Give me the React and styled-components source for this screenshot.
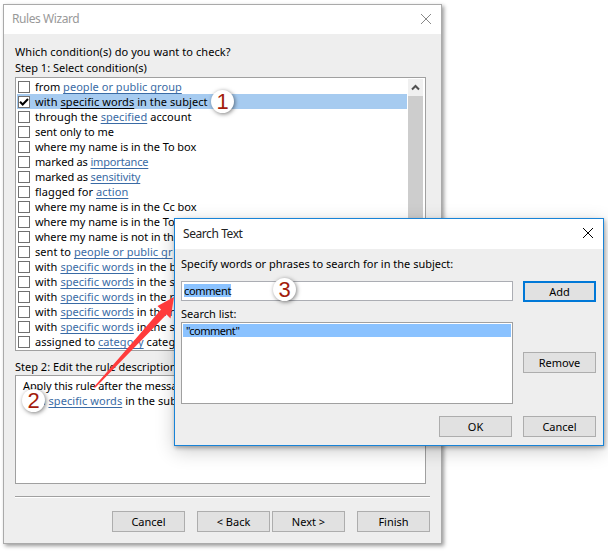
import React from 'react'
import styled, { createGlobalStyle, css } from 'styled-components'

const GlobalStyle = createGlobalStyle`
  body {
    margin: 0;
    background: #fff;
    overflow: hidden;
  }

  * {
    box-sizing: border-box;
  }
`

const Desktop = styled.main`
  position: relative;
  width: 608px;
  height: 551px;
  padding: 4px 0 0 3px;
  overflow: hidden;
  color: #000;
  font: 11px/15px 'Noto Sans', 'Open Sans', sans-serif;
  white-space: nowrap;
`

const Window = styled.section`
  display: flex;
  flex-direction: column;
  width: 439px;
  height: 540px;
  border: 1px solid #aaa;
  background: #eee;
  box-shadow: 2px 2px 4px rgba(0, 0, 0, 0.4);
`

const TitleBar = styled.header`
  display: flex;
  flex: none;
  align-items: center;
  justify-content: space-between;
  height: ${({ $active }) => ($active ? 30 : 29)}px;
  padding: 0 9px 2px 8px;
  background: #fff;
  color: ${({ $active }) => ($active ? '#222' : '#999')};
  font-size: 12px;
  letter-spacing: -0.42px;
`

const Text = styled.span`
  letter-spacing: ${({ $track = 0 }) => $track}px;
`

const Caption = styled(Text)`
  margin: ${({ $margin = 0 }) => $margin};
`

const Body = styled.div`
  display: flex;
  flex: 1;
  flex-direction: column;
  padding: 10px 11px 0 11px;
`

const Conditions = styled.div`
  display: flex;
  gap: 1px;
  width: 411px;
  height: 274px;
  padding: 1px;
  border: 1px solid #a0a0a0;
  background: #fff;
`

const Rows = styled.ul`
  width: 390px;
  margin: 0;
  padding: 0;
  list-style: none;
`

const Row = styled.li`
  display: flex;
  height: 15px;
  padding-left: 1px;
  background: ${({ $selected }) => ($selected ? '#a6cbf0' : '#fff')};
  white-space: pre;
`

const CheckBox = styled.span`
  display: flex;
  flex: none;
  width: 12px;
  height: 12px;
  margin: 2px 5px 0 0;
  border: 1px solid #707070;
  background: #fff;
`

const Link = styled.u`
  color: ${({ $selected }) => ($selected ? '#000' : '#3a6ba5')};
  text-underline-offset: 1.5px;
  text-decoration-thickness: 1px;
  text-decoration-skip-ink: none;
`

const ScrollBar = styled.div`
  width: 15px;
  height: 270px;
  background: #cdcdcd;
`

const ScrollUp = styled.div`
  display: flex;
  align-items: center;
  justify-content: center;
  height: 17px;
  background: #f0f0f0;
`

const Description = styled.div`
  display: flex;
  flex-direction: column;
  width: 411px;
  height: 109px;
  padding: 2px 7px;
  border: 1px solid #a0a0a0;
  background: #fff;
`

const Divider = styled.hr`
  width: 415px;
  height: 2px;
  margin: 12px 0 13px;
  border: 0;
  border-top: 1px solid #a0a0a0;
  background: #fff;
`

const Buttons = styled.footer`
  display: flex;
  justify-content: flex-end;
  gap: ${({ $gap = 12 }) => $gap}px;
`

const Button = styled.button`
  width: 73px;
  height: 21px;
  padding: 0;
  border: ${({ $primary }) => ($primary ? '2px solid #0078d7' : '1px solid #adadad')};
  background: #e1e1e1;
  color: #000;
  font: inherit;
  line-height: 17px;
`

const RemoveButton = styled(Button)`
  margin-top: 46px;
`

const OkButton = styled(Button)`
  justify-self: end;
  margin-right: 1px;
`

const Dialog = styled(Window)`
  position: absolute;
  top: 218px;
  left: 174px;
  width: 430px;
  height: 228px;
  border-color: #1883d7;
  box-shadow: 1px 2px 4px rgba(0, 0, 0, 0.3), 0 5px 18px rgba(0, 0, 0, 0.2);
`

const DialogBody = styled.div`
  display: grid;
  grid-template-columns: 332px 73px;
  grid-template-rows: 25px 25px 110px 21px;
  column-gap: 10px;
  padding: 7px 0 0 6px;
`

const Label = styled.label`
  grid-column: 1 / -1;
`

const Field = styled.div`
  height: 20px;
  padding: 2px;
  border: 1px solid #abadb3;
  background: #fff;
`

const Marked = styled.span`
  display: block;
  width: 47px;
  height: 13px;
  line-height: 13px;
  letter-spacing: -0.35px;
  background: #8ac2ff;
`

const Entry = styled(Marked)`
  width: auto;
  padding-left: 3px;
  letter-spacing: -0.5px;
`

const SearchList = styled.div`
  height: 82px;
  margin-top: 1px;
  padding: 1px;
  border: 1px solid #a0a0a0;
  background: #fff;
`

const ListBlock = styled.div`
  display: flex;
  flex-direction: column;
`

const badgePlace = {
  1: css`left: 211px; top: 90px;`,
  2: css`left: 22px; top: 389px;`,
  3: css`left: 273px; top: 278px;`
}

const Badge = styled.b`
  position: absolute;
  ${({ $step }) => badgePlace[$step]}
  width: 23px;
  height: 23px;
  border-radius: 50%;
  background: #fff;
  box-shadow: 1px 1px 4px rgba(0, 0, 0, 0.5);
  color: #a31c0c;
  font: 22px/23px 'Liberation Sans', sans-serif;
  text-align: center;
`

const Pointer = styled.svg`
  position: absolute;
  top: 0;
  left: 0;
  pointer-events: none;
`

// the labels under the dialog stop at its left edge
const CONDITIONS = [
  { text: ['from ', 'people or public group'], track: 0.04 },
  { text: ['with ', 'specific words', ' in the subject'], track: 0.07 },
  { text: ['through the ', 'specified', ' account'], track: 0.07 },
  { text: ['sent only to me'], track: -0.07 },
  { text: ['where my name is in the To box'], track: -0.07 },
  { text: ['marked as ', 'importance'], track: -0.16 },
  { text: ['marked as ', 'sensitivity'], track: -0.14 },
  { text: ['flagged for ', 'action'], track: 0.09 },
  { text: ['where my name is in the Cc box'], track: -0.07 },
  { text: ['where my name is in the To'], track: -0.07 },
  { text: ['where my name is not in th'], track: -0.07 },
  { text: ['sent to ', 'people or public gr'], track: 0.04 },
  { text: ['with ', 'specific words', ' in the b'], track: 0.05 },
  { text: ['with ', 'specific words', ' in the s'], track: 0.05 },
  { text: ['with ', 'specific words', ' in the r'], track: 0.05 },
  { text: ['with ', 'specific words', ' in the r'], track: 0.05 },
  { text: ['with ', 'specific words', ' in the s'], track: 0.05 },
  { text: ['assigned to ', 'category', ' categ'], track: 0.05 }
]

const SELECTED = 1

const Close = ({ color }) => (
  <svg width='12' height='12' viewBox='0 0 12 12' stroke={color} fill='none'>
    <path d='M1 1l10 10M11 1L1 11' />
  </svg>
)

const Condition = ({ text: [before, link, after], track, selected }) => (
  <Row $selected={selected}>
    <CheckBox>
      {selected && (
        <svg width='10' height='10' viewBox='0 0 10 10' fill='none' stroke='#000' strokeWidth='2'>
          <path d='M1 4.7l2.7 2.8L9 2' />
        </svg>
      )}
    </CheckBox>
    <Text $track={track}>
      {before}
      {link && <Link $selected={selected}>{link}</Link>}
      {after}
    </Text>
  </Row>
)

const RulesWizard = () => (
  <Window>
    <TitleBar>
      Rules Wizard
      <Close color='#888' />
    </TitleBar>
    <Body>
      <Caption $track={0.08}>Which condition(s) do you want to check?</Caption>
      <Caption $margin='1px 0 2px'>Step 1: Select condition(s)</Caption>
      <Conditions>
        <Rows>
          {CONDITIONS.map((condition, i) => (
            <Condition key={i} {...condition} selected={i === SELECTED} />
          ))}
        </Rows>
        <ScrollBar>
          <ScrollUp>
            <svg width='9' height='7' viewBox='0 0 9 7' fill='none' stroke='#505050' strokeWidth='2'>
              <path d='M1 5.5l3.5-3.5L8 5.5' />
            </svg>
          </ScrollUp>
        </ScrollBar>
      </Conditions>
      <Caption $margin='8px 0 1px'>Step 2: Edit the rule description</Caption>
      <Description>
        <Text $track={-0.1}>Apply this rule after the messa</Text>
        <Text $track={0.07}>
          with <Link>specific words</Link> in the sub
        </Text>
      </Description>
      <Divider />
      <Buttons>
        <Button>Cancel</Button>
        <Buttons $gap={2}>
          <Button>&lt; Back</Button>
          <Button>Next &gt;</Button>
        </Buttons>
        <Button>Finish</Button>
      </Buttons>
    </Body>
  </Window>
)

const SearchText = () => (
  <Dialog>
    <TitleBar $active>
      Search Text
      <Close color='#000' />
    </TitleBar>
    <DialogBody>
      <Label>Specify words or phrases to search for in the subject:</Label>
      <Field>
        <Marked>comment</Marked>
      </Field>
      <Button $primary>Add</Button>
      <ListBlock>
        <Text>Search list:</Text>
        <SearchList>
          <Entry>"comment"</Entry>
        </SearchList>
      </ListBlock>
      <RemoveButton>Remove</RemoveButton>
      <OkButton>OK</OkButton>
      <Button>Cancel</Button>
    </DialogBody>
  </Dialog>
)

export default function App () {
  return (
    <Desktop>
      <GlobalStyle />
      <RulesWizard />
      <SearchText />
      <Pointer width='608' height='551'>
        <path d='M93.5 387.5L161 309.5L157.5 306L174 297L170.5 318.5L166.5 314.5L95.5 387.5Z' fill='#ff3b3b' />
      </Pointer>
      <Badge $step={1}>1</Badge>
      <Badge $step={2}>2</Badge>
      <Badge $step={3}>3</Badge>
    </Desktop>
  )
}
